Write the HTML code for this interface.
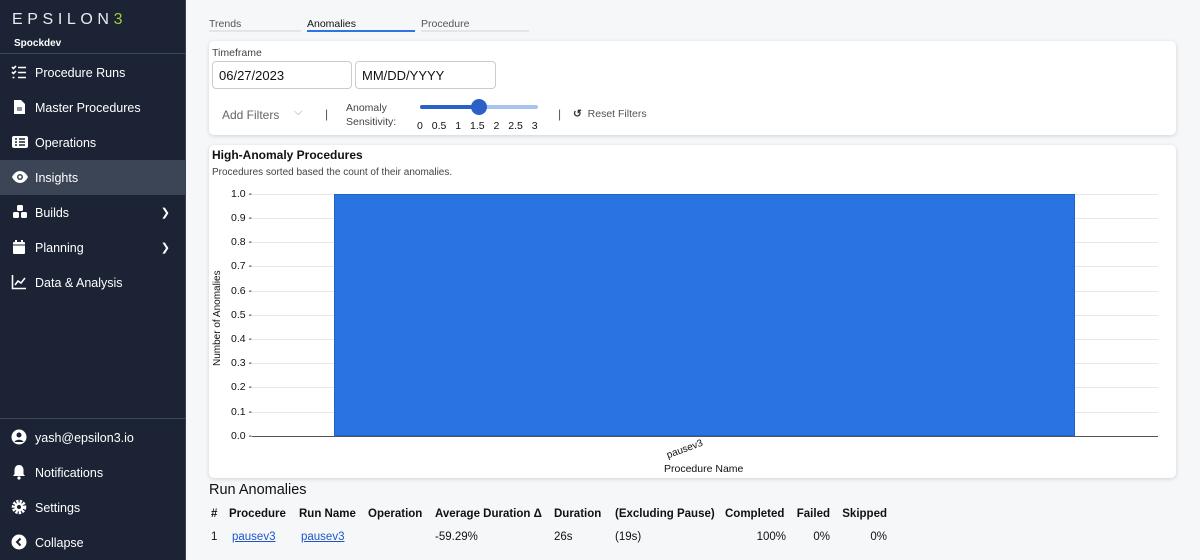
<!DOCTYPE html>
<html><head><meta charset="utf-8"><style>
*{box-sizing:border-box;margin:0;padding:0}
body{width:1200px;height:560px;overflow:hidden;background:#f6f7f9;font-family:"Liberation Sans",sans-serif;position:relative;color:#111}
.sb{position:absolute;left:0;top:0;width:186px;height:560px;background:#1b2334;color:#fff;border-right:1px solid #3a4252}
.logo{position:absolute;left:12px;top:11px;font-size:16px;letter-spacing:4.6px;color:#e8ecf0;font-weight:300}
.logo span{color:#9ecb3c}
.org{position:absolute;left:14px;top:38px;font-size:10px;font-weight:bold}
.sep{position:absolute;left:0;width:186px;height:1px;background:#3e4757}
.it{position:absolute;left:0;width:185px;height:35px;display:flex;align-items:center;font-size:12.5px;padding-left:35px}
.it svg{position:absolute;left:11px;top:9px}
.it.act{background:#3b4556}
.chev{position:absolute;right:15px;top:11px;font-size:11px}
.tab{position:absolute;top:18px;font-size:10.5px;color:#555;height:14px;border-bottom:2px solid #e2e5ea}
.card{position:absolute;background:#fff;border-radius:5px;box-shadow:0 1px 4px rgba(0,0,0,.15)}
.inp{position:absolute;top:61px;height:28px;border:1px solid #c9ccd1;border-radius:4px;font-size:13px;padding:6px 6px}
.small{font-size:10.5px;color:#444;position:absolute}
.yl{position:absolute;font-size:10.5px;left:222px;width:30px;text-align:right}
.grid{position:absolute;left:252px;width:906px;height:1px;background:#e8e8e8}
th,td{font-size:11.5px;text-align:left;white-space:nowrap}
a{color:#1d56c9}
</style></head><body>
<div class="sb">
<div class="logo">EPSILON<span>3</span></div>
<div class="org">Spockdev</div>
<div class="sep" style="top:53px"></div>
<div class="it" style="top:55px"><svg width="16" height="16" viewBox="0 0 16 16" fill="none" stroke="#fff" stroke-width="1.6"><path d="M1 3l1.5 1.5L5 2M1 8l1.5 1.5L5 7M7 3.5h8M7 8.5h8M1.5 13.5h2M7 13.5h8"/></svg>Procedure Runs</div>
<div class="it" style="top:90px"><svg width="16" height="16" viewBox="0 0 16 16"><path d="M3 1h7l4 4v10H3z" fill="#fff"/><path d="M6 9h5M6 11h5" stroke="#1b2334"/></svg>Master Procedures</div>
<div class="it" style="top:125px"><svg width="18" height="16" viewBox="0 0 18 16"><rect x="1" y="2" width="16" height="12" rx="2" fill="#fff"/><path d="M4 5h2M8 5h6M4 8h2M8 8h6M4 11h2M8 11h6" stroke="#1b2334" stroke-width="1.4"/></svg>Operations</div>
<div class="it act" style="top:160px"><svg width="18" height="16" viewBox="0 0 18 16"><path d="M1 8c2-4 5-6 8-6s6 2 8 6c-2 4-5 6-8 6s-6-2-8-6z" fill="#fff"/><circle cx="9" cy="8" r="3" fill="#3b4556"/><circle cx="9" cy="8" r="1.5" fill="#fff"/></svg>Insights</div>
<div class="it" style="top:195px"><svg width="18" height="16" viewBox="0 0 18 16" fill="#fff"><rect x="6" y="1" width="6" height="6" rx="1.5"/><rect x="2" y="8" width="6" height="6" rx="1.5"/><rect x="10" y="8" width="6" height="6" rx="1.5"/></svg>Builds<span class="chev">&#x276F;</span></div>
<div class="it" style="top:230px"><svg width="16" height="16" viewBox="0 0 16 16" fill="#fff"><rect x="2" y="3" width="12" height="12" rx="1"/><rect x="4" y="1" width="2" height="3"/><rect x="10" y="1" width="2" height="3"/><path d="M2 6h12" stroke="#1b2334"/></svg>Planning<span class="chev">&#x276F;</span></div>
<div class="it" style="top:265px"><svg width="16" height="16" viewBox="0 0 16 16" fill="none" stroke="#fff" stroke-width="1.6"><path d="M1.5 1v13.5H15M4 11l3-4 3 2 4-5"/></svg>Data &amp; Analysis</div>
<div class="sep" style="top:418px"></div>
<div class="it" style="top:420px"><svg width="16" height="16" viewBox="0 0 16 16"><circle cx="8" cy="8" r="7.5" fill="#fff"/><circle cx="8" cy="6" r="2.5" fill="#1b2334"/><path d="M3.5 13c1-3 8-3 9 0" fill="#1b2334"/></svg>yash@epsilon3.io</div>
<div class="it" style="top:455px"><svg width="16" height="16" viewBox="0 0 16 16" fill="#fff"><path d="M8 1c-3 0-4.5 2.5-4.5 5v4L2 12h12l-1.5-2V6C12.5 3.5 11 1 8 1z"/><circle cx="8" cy="14" r="1.6"/></svg>Notifications</div>
<div class="it" style="top:490px"><svg width="16" height="16" viewBox="0 0 16 16"><circle cx="8" cy="8" r="5.5" fill="none" stroke="#fff" stroke-width="3.5" stroke-dasharray="2.2 1.1"/><circle cx="8" cy="8" r="4.5" fill="#fff"/><circle cx="8" cy="8" r="2" fill="#1b2334"/></svg>Settings</div>
<div class="it" style="top:525px"><svg width="16" height="16" viewBox="0 0 16 16"><circle cx="8" cy="8" r="7.5" fill="#fff"/><path d="M9.5 4.5L6 8l3.5 3.5" stroke="#1b2334" stroke-width="2" fill="none"/></svg>Collapse</div>
</div>

<div class="tab" style="left:209px;width:92px">Trends</div>
<div class="tab" style="left:307px;width:108px;color:#111;border-color:#2f74e6">Anomalies</div>
<div class="tab" style="left:421px;width:108px">Procedure</div>

<div class="card" style="left:209px;top:41px;width:967px;height:94px"></div>
<div class="small" style="left:212px;top:47px">Timeframe</div>
<div class="inp" style="left:212px;width:140px">06/27/2023</div>
<div class="inp" style="left:355px;width:141px">MM/DD/YYYY</div>
<div style="position:absolute;left:222px;top:108px;font-size:12px;color:#666">Add Filters</div>
<div style="position:absolute;left:294px;top:106px;font-size:11px;color:#999">&#x2335;</div>
<div style="position:absolute;left:325px;top:107px;font-size:12px;color:#555">|</div>
<div class="small" style="left:346px;top:101px;line-height:14px">Anomaly<br>Sensitivity:</div>
<div style="position:absolute;left:420px;top:105px;width:59px;height:4px;background:#2a60c8;border-radius:2px"></div>
<div style="position:absolute;left:479px;top:105px;width:59px;height:4px;background:#a9c3ef;border-radius:2px"></div>
<div style="position:absolute;left:471px;top:99px;width:16px;height:16px;border-radius:50%;background:#2a60c8"></div>
<div style="position:absolute;left:417px;top:120px;font-size:10.5px;word-spacing:6px">0 0.5 1 1.5 2 2.5 3</div>
<div style="position:absolute;left:558px;top:107px;font-size:12px;color:#555">|</div>
<div style="position:absolute;left:573px;top:108px;font-size:10.5px;color:#555"><b style="color:#333">&#x21BA;</b>&nbsp; Reset Filters</div>

<div class="card" style="left:209px;top:145px;width:967px;height:333px"></div>
<div style="position:absolute;left:212px;top:148px;font-size:12px;font-weight:bold">High-Anomaly Procedures</div>
<div class="small" style="left:212px;top:167px;font-size:10px">Procedures sorted based the count of their anomalies.</div>
<div class="grid" style="top:194px"></div><div class="yl" style="top:188px">1.0 -</div>
<div class="grid" style="top:218px"></div><div class="yl" style="top:212px">0.9 -</div>
<div class="grid" style="top:242px"></div><div class="yl" style="top:236px">0.8 -</div>
<div class="grid" style="top:266px"></div><div class="yl" style="top:260px">0.7 -</div>
<div class="grid" style="top:291px"></div><div class="yl" style="top:285px">0.6 -</div>
<div class="grid" style="top:315px"></div><div class="yl" style="top:309px">0.5 -</div>
<div class="grid" style="top:339px"></div><div class="yl" style="top:333px">0.4 -</div>
<div class="grid" style="top:363px"></div><div class="yl" style="top:357px">0.3 -</div>
<div class="grid" style="top:387px"></div><div class="yl" style="top:381px">0.2 -</div>
<div class="grid" style="top:412px"></div><div class="yl" style="top:406px">0.1 -</div>
<div class="yl" style="top:430px">0.0 -</div>
<div style="position:absolute;left:252px;top:436px;width:906px;height:1px;background:#555"></div>
<div style="position:absolute;left:334px;top:194px;width:741px;height:242px;background:#2a74e2;border:1px solid #1f63cc"></div>
<div style="position:absolute;left:212px;top:366px;font-size:10px;transform:rotate(-90deg);transform-origin:0 0;white-space:nowrap">Number of Anomalies</div>
<div style="position:absolute;left:666px;top:444px;font-size:10px;transform:rotate(-20deg)">pausev3</div>
<div style="position:absolute;left:664px;top:463px;font-size:10.5px">Procedure Name</div>

<div style="position:absolute;left:209px;top:482px;font-size:14.5px">Run Anomalies</div>
<table style="position:absolute;left:205px;top:505px;border-collapse:collapse">
<tr style="height:18px"><th style="width:24px;padding-left:6px">#</th><th style="width:70px">Procedure</th><th style="width:69px">Run Name</th><th style="width:67px">Operation</th><th style="width:119px">Average Duration Δ</th><th style="width:61px">Duration</th><th style="width:110px">(Excluding Pause)</th><th style="width:61px">Completed</th><th style="width:44px;text-align:right">Failed</th><th style="width:57px;text-align:right">Skipped</th></tr>
<tr style="height:27px"><td style="padding-left:6px">1</td><td style="padding-left:3px"><a href="#">pausev3</a></td><td style="padding-left:2px"><a href="#">pausev3</a></td><td></td><td>-59.29%</td><td>26s</td><td>(19s)</td><td style="text-align:right">100%</td><td style="text-align:right">0%</td><td style="text-align:right">0%</td></tr>
</table>
</body></html>
